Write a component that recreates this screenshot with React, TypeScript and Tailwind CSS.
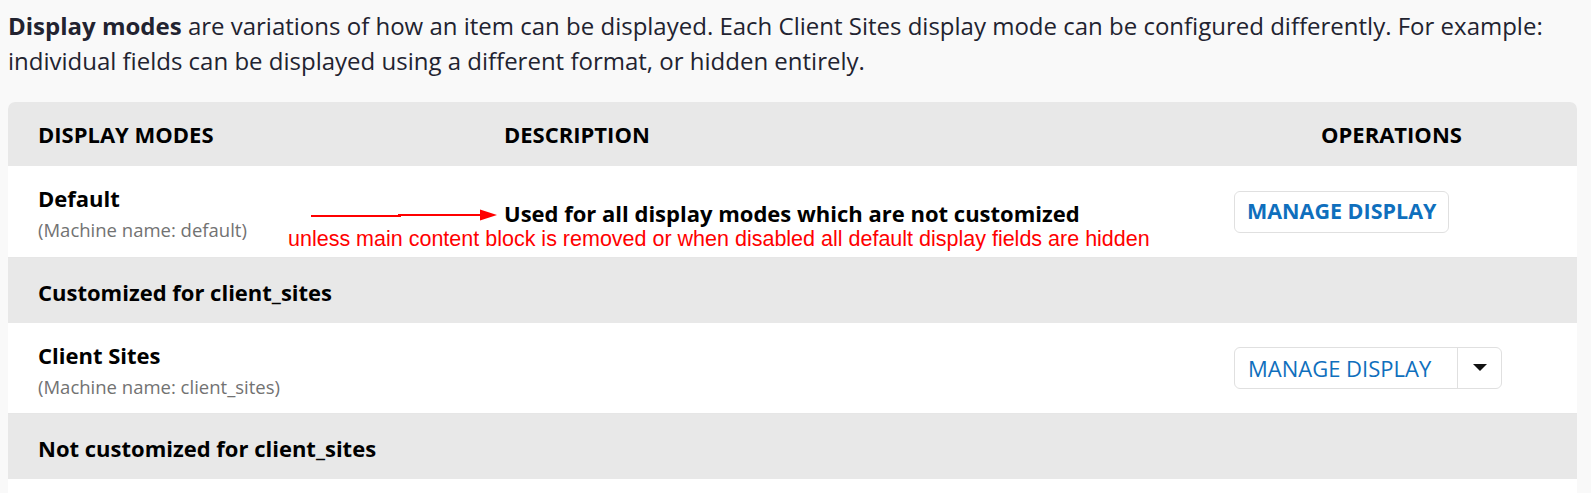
export default function App() {
  return (
    <div className="min-h-screen bg-[#f9f9f9] pl-2 pr-[14px] pt-[8px] font-['Open_Sans',sans-serif] text-[#222330]">
      {/* Intro */}
      <p className="text-[24px] leading-[35px]">
        <strong className="font-bold">Display modes</strong> are variations of how an item can be displayed. Each Client Sites display mode can be configured differently. For example: individual fields can be displayed using a different format, or hidden entirely.
      </p>

      {/* Table */}
      <div className="mt-[24px] overflow-hidden rounded-t-[7px] bg-white">
        {/* Header */}
        <div className="grid h-[64px] grid-cols-[496px_730px_1fr] items-center bg-[#e8e8e8] text-[22px] font-bold uppercase text-black">
          <div className="pl-[30px]">Display modes</div>
          <div>Description</div>
          <div className="pl-[87px]">Operations</div>
        </div>

        {/* Default */}
        <div className="relative grid grid-cols-[496px_730px_1fr] border-b border-[#e6e6e6]">
          <div className="pl-[30px] pt-[17px] pb-[14px]">
            <div className="text-[22px] font-bold leading-[30px] text-black">Default</div>
            <div className="mt-[4px] text-[18.5px] leading-[26px] text-[#727272]">(Machine name: default)</div>
          </div>
          <div className="flex items-center pt-[4px] text-[22px] font-bold text-black">
            Used for all display modes which are not customized
          </div>
          <div className="flex items-center">
            <button className="h-[42px] rounded-[6px] border border-[#e0e0e0] bg-white px-[12px] text-[21.5px] font-bold text-[#0f6fbd]">
              MANAGE DISPLAY
            </button>
          </div>

          {/* annotation */}
          <svg className="absolute left-[302px] top-[42px]" width="190" height="14" viewBox="0 0 190 14">
            <rect x="1" y="7" width="90" height="2" fill="#ff0000" />
            <rect x="88" y="6" width="84" height="2" fill="#ff0000" />
            <polygon points="170,1.5 187,7 170,12.5" fill="#ff0000" />
          </svg>
          <div className="absolute left-[280px] top-[60px] whitespace-nowrap font-['Liberation_Sans',Arial,sans-serif] text-[21.5px] leading-[26px] text-[#ff0000]">
            unless main content block is removed or when disabled all default display fields are hidden
          </div>
        </div>

        {/* Customized */}
        <div className="flex h-[65px] items-center bg-[#e8e8e8] pl-[30px] pt-[3px] text-[22px] font-bold text-black">
          Customized for client_sites
        </div>

        {/* Client Sites */}
        <div className="grid grid-cols-[496px_730px_1fr] border-b border-[#e6e6e6]">
          <div className="pl-[30px] pt-[17px] pb-[13px]">
            <div className="text-[22px] font-bold leading-[30px] text-black">Client Sites</div>
            <div className="mt-[4px] text-[18.5px] leading-[26px] text-[#727272]">(Machine name: client_sites)</div>
          </div>
          <div />
          <div className="flex items-center">
            <div className="flex h-[42px] items-stretch rounded-[6px] border border-[#e0e0e0] bg-white">
              <button className="pl-[13px] pr-[26px] text-[22px] text-[#0f6fbd]">MANAGE DISPLAY</button>
              <button className="flex w-[44px] items-center justify-center border-l border-[#e0e0e0]">
                <svg width="14" height="8" viewBox="0 0 14 8">
                  <polygon points="0,0 14,0 7,7" fill="#111" />
                </svg>
              </button>
            </div>
          </div>
        </div>

        {/* Not customized */}
        <div className="flex h-[65px] items-center bg-[#e8e8e8] pl-[30px] pt-[3px] text-[22px] font-bold text-black">
          Not customized for client_sites
        </div>
        <div className="h-[14px] bg-white" />
      </div>
    </div>
  )
}
